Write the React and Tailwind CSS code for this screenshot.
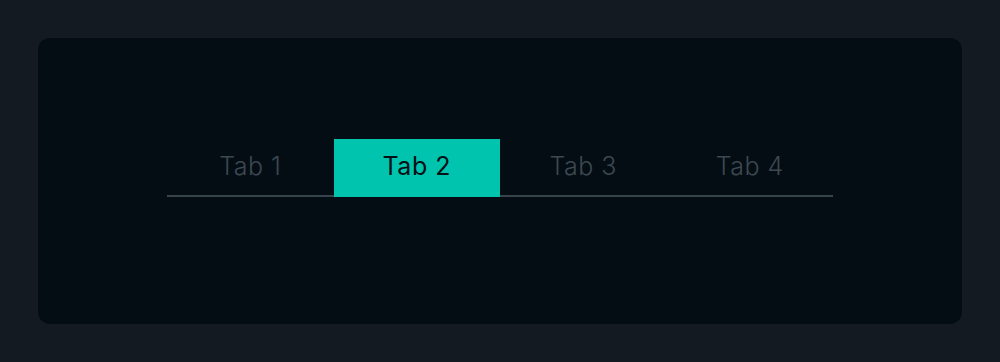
import React, { useState } from 'react';

const tabs = ['Tab 1', 'Tab 2', 'Tab 3', 'Tab 4'];

export default function App() {
    const [active, setActive] = useState(1);

    return (
        <div className="w-[1000px] h-[362px] bg-[#131a21] p-[38px]" style={{ fontFamily: 'Inter, "Open Sans", sans-serif' }}>
            <div className="w-full h-full bg-[#050d14] rounded-[12px] flex flex-col items-center pt-[101px]">
                {/* Tab bar */}
                <div className="w-[666px] flex flex-row border-b-2 border-[#38444c]">
                    {tabs.map((tab, i) => (
                        <div
                            key={tab}
                            onClick={() => setActive(i)}
                            className={`flex-1 h-[58px] -mb-[2px] flex items-center justify-center pb-[2px] text-[25px] tracking-[0.02em] cursor-pointer ${
                                active === i
                                    ? 'bg-[#00c4ad] text-[#061015] font-normal'
                                    : 'text-[#3b4851] font-light'
                            }`}
                        >
                            {tab}
                        </div>
                    ))}
                </div>
            </div>
        </div>
    );
}
